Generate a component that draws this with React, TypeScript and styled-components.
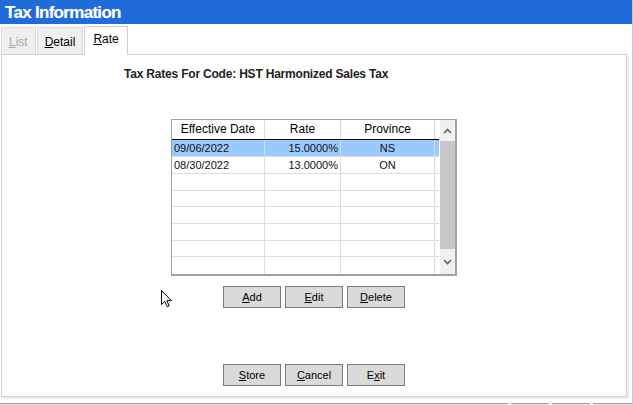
import styled, { createGlobalStyle } from 'styled-components';

const GlobalStyle = createGlobalStyle`
    html, body {
        margin: 0;
        padding: 0;
        background: #ffffff;
        font-family: "Liberation Sans", Arial, sans-serif;
    }
`

const Window = styled.div`
    position: relative;
    width: 633px;
    height: 405px;
    box-sizing: border-box;
    border-right: 1px solid #b3cff0;
    display: flex;
    flex-direction: column;
    overflow: hidden;
    background: #ffffff;
`

const TitleBar = styled.div`
    height: 24px;
    box-sizing: border-box;
    padding: 4px 0 0 5px;
    background: #1f6bdb;
    color: #ffffff;
    font-size: 17px;
    font-weight: bold;
    line-height: 18px;
    letter-spacing: -0.7px;
    text-shadow: 0 0 1px rgba(255, 255, 255, 0.4);
`

const TabStrip = styled.div`
    height: 30px;
    display: flex;
    align-items: flex-end;
    gap: 1px;
    padding-left: 1px;
`

const Tab = styled.div<{ $active?: boolean; $disabled?: boolean }>`
    position: relative;
    z-index: 1;
    box-sizing: border-box;
    height: ${props => props.$active ? '29px' : '27px'};
    margin-bottom: ${props => props.$active ? '-1px' : '0'};
    padding: ${props => props.$active ? '5px 8px 0' : '7px 7px 0'};
    border: 1px solid ${props => props.$active ? '#cfcfcf' : '#dadada'};
    border-bottom: none;
    background: ${props => props.$active ? '#ffffff' : '#efefef'};
    color: ${props => props.$disabled ? '#a8a8a8' : '#000000'};
    font-size: 12px;
    line-height: 14px;
`

const Panel = styled.div`
    width: 626px;
    height: 343px;
    box-sizing: border-box;
    margin-left: 1px;
    border: 1px solid #d2d2d2;
    box-shadow: 2px 2px 0 #ebebeb;
    display: flex;
    flex-direction: column;
    align-items: center;
`

const Heading = styled.div`
    align-self: flex-start;
    padding: 12px 0 0 122px;
    font-size: 12px;
    font-weight: bold;
    line-height: 14px;
    letter-spacing: -0.2px;
    color: #222222;
`

const TableBox = styled.div`
    margin-top: 38px;
    width: 286px;
    height: 157px;
    box-sizing: border-box;
    border: 1px solid #a2a2a2;
    border-width: 1px 2px 2px 1px;
    display: flex;
`

const Grid = styled.div`
    flex: 1;
    display: flex;
    flex-direction: column;
`

const HeaderRow = styled.div`
    display: grid;
    grid-template-columns: 93px 76px 94px 1fr;
    height: 20px;
    box-sizing: border-box;
    border-bottom: 1px solid #000000;
`

const HeaderCell = styled.div`
    border-right: 1px solid #dadada;
    font-size: 12px;
    line-height: 19px;
    text-align: center;
    color: #000000;
    &:last-child {
        border-right: none;
    }
`

const Row = styled.div<{ $selected?: boolean }>`
    display: grid;
    grid-template-columns: 93px 76px 94px 1fr;
    height: 17px;
    box-sizing: border-box;
    border-bottom: 1px solid #dcdcdc;
    background: ${props => props.$selected ? '#99c9ff' : 'transparent'};
    &:last-child {
        border-bottom: none;
    }
`

const Cell = styled.div<{ $align?: 'left' | 'right' | 'center' }>`
    border-right: 1px solid #dcdcdc;
    padding: 0 2px;
    font-size: 11px;
    line-height: 16px;
    text-align: ${props => props.$align || 'left'};
    color: #111111;
    &:last-child {
        border-right: none;
    }
`

const ScrollBar = styled.div`
    width: 17px;
    margin-left: 1px;
    display: flex;
    flex-direction: column;
    background: #f0f0f0;
`

const ScrollArrow = styled.div<{ $h: number }>`
    height: ${props => props.$h}px;
    display: flex;
    align-items: center;
    justify-content: center;
`

const ScrollThumb = styled.div`
    flex: 1;
    background: #c8c8c8;
`

const ButtonRow = styled.div<{ $top: number }>`
    margin-top: ${props => props.$top}px;
    display: flex;
    gap: 4px;
`

const Button = styled.button`
    width: 58px;
    height: 22px;
    box-sizing: border-box;
    border: 1px solid #7a7a7a;
    background: #dadada;
    color: #000000;
    font-family: "Liberation Sans", Arial, sans-serif;
    font-size: 11px;
    padding: 0;
`

const Cursor = styled.svg`
    position: absolute;
    left: 160px;
    top: 289px;
`

const StatusBar = styled.div`
    margin-top: auto;
    height: 2px;
    display: flex;
    gap: 3px;
`

const StatusSegment = styled.div<{ $w?: number }>`
    ${props => props.$w ? `width: ${props.$w}px;` : 'flex: 1;'}
    border-top: 1px solid #9c9c9c;
    background: #ececec;
`

interface RateRow {
    date: string,
    rate: string,
    province: string
}

const rates: RateRow[] = [
    { date: '09/06/2022', rate: '15.0000%', province: 'NS' },
    { date: '08/30/2022', rate: '13.0000%', province: 'ON' },
]

export default function App(){
    const rows = [...rates, ...Array(8 - rates.length).fill(null)];

    return(
        <Window>
            <GlobalStyle />
            <TitleBar>Tax Information</TitleBar>
            <TabStrip>
                <Tab $disabled><u>L</u>ist</Tab>
                <Tab><u>D</u>etail</Tab>
                <Tab $active><u>R</u>ate</Tab>
            </TabStrip>
            <Panel>
                <Heading>Tax Rates For Code: HST Harmonized Sales Tax</Heading>
                <TableBox>
                    <Grid>
                        <HeaderRow>
                            <HeaderCell>Effective Date</HeaderCell>
                            <HeaderCell>Rate</HeaderCell>
                            <HeaderCell>Province</HeaderCell>
                            <HeaderCell />
                        </HeaderRow>
                        {rows.map((r, i) => (
                            <Row key={i} $selected={i === 0}>
                                <Cell>{r ? r.date : ''}</Cell>
                                <Cell $align="right">{r ? r.rate : ''}</Cell>
                                <Cell $align="center">{r ? r.province : ''}</Cell>
                                <Cell />
                            </Row>
                        ))}
                    </Grid>
                    <ScrollBar>
                        <ScrollArrow $h={21}>
                            <svg width="9" height="6" viewBox="0 0 9 6">
                                <path d="M1 5 L4.5 1.5 L8 5" fill="none" stroke="#606060" strokeWidth="1.6" />
                            </svg>
                        </ScrollArrow>
                        <ScrollThumb />
                        <ScrollArrow $h={25}>
                            <svg width="9" height="6" viewBox="0 0 9 6">
                                <path d="M1 1 L4.5 4.5 L8 1" fill="none" stroke="#606060" strokeWidth="1.6" />
                            </svg>
                        </ScrollArrow>
                    </ScrollBar>
                </TableBox>
                <ButtonRow $top={10}>
                    <Button><u>A</u>dd</Button>
                    <Button><u>E</u>dit</Button>
                    <Button><u>D</u>elete</Button>
                </ButtonRow>
                <ButtonRow $top={56}>
                    <Button><u>S</u>tore</Button>
                    <Button><u>C</u>ancel</Button>
                    <Button>E<u>x</u>it</Button>
                </ButtonRow>
            </Panel>
            <StatusBar>
                <StatusSegment />
                <StatusSegment $w={38} />
                <StatusSegment $w={38} />
                <StatusSegment $w={39} />
            </StatusBar>
            <Cursor width="13" height="20" viewBox="0 0 13 20">
                <path d="M1.5 1.5 L1.5 15.5 L4.8 12.4 L7.2 17.8 L9.2 16.9 L6.9 11.6 L11.3 11.6 Z" fill="#ffffff" stroke="#000000" strokeWidth="1" strokeLinejoin="miter" />
            </Cursor>
        </Window>
    )
}
